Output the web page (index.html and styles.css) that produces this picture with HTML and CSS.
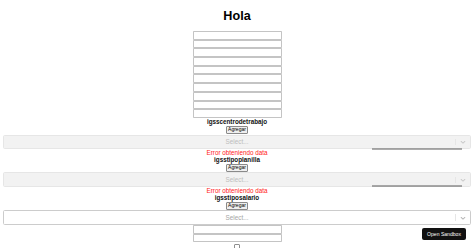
FILE: index.html
```html
<!DOCTYPE html>
<html lang="es">
<head>
<meta charset="utf-8">
<title>Hola</title>
<link rel="stylesheet" href="styles.css">
</head>
<body>
<div class="app">
  <h1 class="title">Hola</h1>
  <div class="inputs">
    <input class="text-input" type="text">
    <input class="text-input" type="text">
    <input class="text-input" type="text">
    <input class="text-input" type="text">
    <input class="text-input" type="text">
    <input class="text-input" type="text">
    <input class="text-input" type="text">
    <input class="text-input" type="text">
    <input class="text-input" type="text">
    <input class="text-input" type="text">
  </div>

  <div class="catalog first">
    <div class="catalog-name">igsscentrodetrabajo</div>
    <button class="add-btn" type="button">Agregar</button>
    <div class="select is-disabled">
      <div class="select-value">Select...</div>
      <div class="select-indicators">
        <span class="select-sep"></span>
        <svg class="select-chevron" viewBox="0 0 20 20"><path d="M4.516 7.548c0.436-0.446 1.043-0.481 1.576 0l3.908 3.747 3.908-3.747c0.533-0.481 1.141-0.446 1.574 0 0.436 0.445 0.408 1.197 0 1.615-0.406 0.418-4.695 4.502-4.695 4.502-0.217 0.223-0.502 0.335-0.787 0.335s-0.57-0.112-0.789-0.335c0 0-4.287-4.084-4.695-4.502s-0.436-1.17 0-1.615z"/></svg>
      </div>
    </div>
    <div class="error">Error obteniendo data</div>
  </div>

  <div class="catalog">
    <div class="catalog-name">igsstipoplanilla</div>
    <button class="add-btn" type="button">Agregar</button>
    <div class="select is-disabled">
      <div class="select-value">Select...</div>
      <div class="select-indicators">
        <span class="select-sep"></span>
        <svg class="select-chevron" viewBox="0 0 20 20"><path d="M4.516 7.548c0.436-0.446 1.043-0.481 1.576 0l3.908 3.747 3.908-3.747c0.533-0.481 1.141-0.446 1.574 0 0.436 0.445 0.408 1.197 0 1.615-0.406 0.418-4.695 4.502-4.695 4.502-0.217 0.223-0.502 0.335-0.787 0.335s-0.57-0.112-0.789-0.335c0 0-4.287-4.084-4.695-4.502s-0.436-1.17 0-1.615z"/></svg>
      </div>
    </div>
    <div class="error">Error obteniendo data</div>
  </div>

  <div class="catalog">
    <div class="catalog-name">igsstiposalario</div>
    <button class="add-btn" type="button">Agregar</button>
    <div class="select">
      <div class="select-value">Select...</div>
      <div class="select-indicators">
        <span class="select-sep"></span>
        <svg class="select-chevron" viewBox="0 0 20 20"><path d="M4.516 7.548c0.436-0.446 1.043-0.481 1.576 0l3.908 3.747 3.908-3.747c0.533-0.481 1.141-0.446 1.574 0 0.436 0.445 0.408 1.197 0 1.615-0.406 0.418-4.695 4.502-4.695 4.502-0.217 0.223-0.502 0.335-0.787 0.335s-0.57-0.112-0.789-0.335c0 0-4.287-4.084-4.695-4.502s-0.436-1.17 0-1.615z"/></svg>
      </div>
    </div>
  </div>

  <div class="inputs">
    <input class="text-input" type="text">
    <input class="text-input" type="text">
  </div>
  <input class="check" type="checkbox">
</div>
<button class="sandbox-btn" type="button">Open Sandbox</button>
</body>
</html>
```

FILE: styles.css
```css
html {
  overflow: hidden;
  background: #fff;
}

body {
  margin: 0;
  font-family: "Liberation Sans", Arial, sans-serif;
  color: #000;
}

.app {
  padding: 0 3px;
  text-align: center;
}

.title {
  margin: 9px 0 8px;
  font-size: 12.6px;
  line-height: 14px;
  font-weight: 700;
}

.inputs {
  display: flex;
  flex-direction: column;
  align-items: center;
}

.text-input {
  display: block;
  box-sizing: border-box;
  width: 89px;
  height: 8.7px;
  margin: 0;
  padding: 0;
  border: 1px solid #c4c4c4;
  border-radius: 0.8px;
  background: #fff;
}

.catalog.first {
  margin-top: 0.5px;
}

.catalog-name {
  font-size: 6.3px;
  line-height: 7.2px;
  font-weight: 700;
  color: #111;
}

.add-btn {
  display: block;
  box-sizing: border-box;
  height: 7.4px;
  margin: 0.8px auto;
  padding: 0 1.6px;
  font-family: "Liberation Sans", Arial, sans-serif;
  font-size: 5px;
  line-height: 5.2px;
  color: #000;
  background: #efefef;
  border: 1px solid #8a8a8a;
  border-radius: 1px;
}

.select {
  position: relative;
  display: flex;
  align-items: center;
  box-sizing: border-box;
  height: 14.5px;
  background: #fff;
  border: 1px solid #cccccc;
  border-radius: 1.6px;
}

.select.is-disabled {
  background: #f2f2f2;
  border-color: #e6e6e6;
}

.select.is-disabled::after {
  content: "";
  position: absolute;
  right: 8px;
  bottom: -1.5px;
  width: 90px;
  height: 2px;
  background: rgba(90, 90, 90, 0.5);
}

.select-value {
  flex: 1;
  padding-left: 15px;
  font-size: 6.4px;
  line-height: 7.4px;
  color: #a6a6a6;
  text-align: center;
}

.select.is-disabled .select-value {
  color: #bdbdbd;
}

.select-indicators {
  display: flex;
  align-items: center;
}

.select-sep {
  width: 0.5px;
  height: 6.4px;
  background: #e6e6e6;
}

.select-chevron {
  width: 8px;
  height: 8px;
  margin: 0 3.2px;
  fill: #b3b3b3;
}

.select.is-disabled .select-chevron {
  fill: #c8c8c8;
}

.error {
  font-size: 6.3px;
  line-height: 7.2px;
  color: #ff2020;
}

.check {
  display: block;
  -webkit-appearance: none;
  appearance: none;
  box-sizing: border-box;
  width: 5.2px;
  height: 5.2px;
  margin: 1.5px auto 0;
  border: 1px solid #8f8f8f;
  border-radius: 1px;
  background: #fff;
}

.sandbox-btn {
  position: fixed;
  right: 8px;
  bottom: 8px;
  height: 12.5px;
  padding: 0 5px;
  font-family: "Liberation Sans", Arial, sans-serif;
  font-size: 5.1px;
  line-height: 12.5px;
  color: #fff;
  background: #111;
  border: none;
  border-radius: 2px;
}
```
